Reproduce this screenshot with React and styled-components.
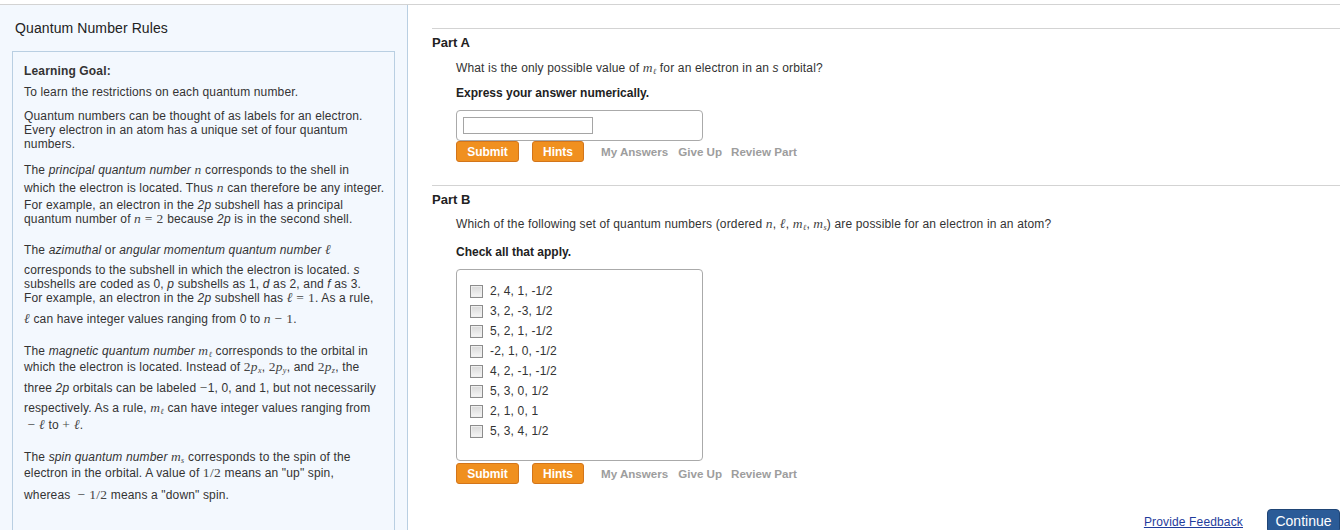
import React from "react";
import styled, { createGlobalStyle } from "styled-components";

const GlobalStyle = createGlobalStyle`
  html, body { margin: 0; padding: 0; background: #fff; }
  body { font-family: "Liberation Sans", Arial, sans-serif; color: #333; }
`;

const Page = styled.div`
  height: 530px;
  overflow: hidden;
  padding-top: 4px;
  box-sizing: border-box;
`;

const Frame = styled.div`
  border-top: 1px solid #d3d3d3;
  display: flex;
  height: 100%;
`;

const Sidebar = styled.aside`
  width: 408px;
  flex-shrink: 0;
  background: #f3f8fe;
  border-right: 1px solid #b9cfe2;
  box-sizing: border-box;
  padding: 14px 12px 0 12px;
`;

const SideTitle = styled.h2`
  margin: 0 0 14px 3px;
  font-size: 14px;
  line-height: 18px;
  font-weight: normal;
  color: #222;
  letter-spacing: 0.1px;
`;

const GoalBox = styled.div`
  border: 1px solid #b9cfe2;
  border-bottom: none;
  height: 600px;
  padding: 12px 11px 0 11px;
  font-size: 12px;
  color: #333;
  letter-spacing: 0.15px;
`;

const Line = styled.div`
  margin-top: ${(p) => p.$gap || 0}px;
  line-height: 14px;
  height: 14px;
  white-space: nowrap;
  font-weight: ${(p) => (p.$bold ? "bold" : "normal")};
`;

const Math = styled.span`
  font-family: "Liberation Serif", "Times New Roman", serif;
  font-style: ${(p) => (p.$upright ? "normal" : "italic")};
  font-size: 13.5px;
  line-height: 0;
  letter-spacing: 0.3px;
  color: #444;
`;

const Sub = styled.sub`
  font-size: 8px;
  line-height: 0;
  vertical-align: -2px;
`;

const Main = styled.main`
  flex: 1;
  padding-left: 24px;
  padding-top: 23px;
`;

const Section = styled.section`
  border-top: 1px solid #d3d3d3;
  padding-top: 6px;
  margin-top: ${(p) => p.$before || 0}px;
`;

const PartTitle = styled.h3`
  margin: 0;
  font-size: 13px;
  line-height: 16px;
  font-weight: bold;
  color: #222;
`;

const Body = styled.div`
  padding-left: 24px;
`;

const Prompt = styled.p`
  margin: ${(p) => p.$top}px 0 0 0;
  font-size: 12px;
  line-height: 14px;
  height: 14px;
  color: #333;
  letter-spacing: 0.15px;
  white-space: nowrap;
`;

const Instruction = styled.p`
  margin: ${(p) => p.$top}px 0 0 0;
  font-size: 12px;
  line-height: 14px;
  font-weight: bold;
  color: #222;
`;

const AnswerBox = styled.div`
  margin-top: 10px;
  width: 247px;
  height: ${(p) => p.$h}px;
  border: 1px solid #aaa;
  border-radius: 4px;
  box-sizing: border-box;
  padding: ${(p) => p.$pad};
`;

const TextInput = styled.div`
  width: 130px;
  height: 17px;
  border: 1px solid #a5a5a5;
  box-sizing: border-box;
  background: #fff;
`;

const Actions = styled.div`
  display: flex;
  align-items: center;
  margin-top: ${(p) => p.$top}px;
  height: 21px;
`;

const OrangeButton = styled.button`
  width: ${(p) => p.$w}px;
  height: 21px;
  margin-right: 13px;
  padding: 0;
  background: #f0901f;
  border: 1px solid #d3751a;
  border-radius: 3px;
  color: #fff;
  font-family: "Liberation Sans", Arial, sans-serif;
  font-size: 12px;
  font-weight: bold;
`;

const GrayLink = styled.span`
  margin-left: ${(p) => p.$left}px;
  font-size: 11.6px;
  font-weight: bold;
  color: #9d9d9d;
`;

const OptionRow = styled.label`
  display: flex;
  align-items: center;
  height: 20px;
  font-size: 12px;
  color: #333;
  letter-spacing: 0.15px;
`;

const Check = styled.span`
  width: 11px;
  height: 11px;
  border: 1px solid #8c8c8c;
  background: linear-gradient(#d8d8d8, #f5f5f5);
  margin-right: 7px;
  box-shadow: inset 0 0 0 1px #eee;
`;

const Footer = styled.div`
  display: flex;
  justify-content: flex-end;
  align-items: center;
  margin-top: 25px;
  gap: 24px;
`;

const FeedbackLink = styled.a`
  font-size: 12px;
  color: #1f3c9c;
  text-decoration: underline;
  margin-top: 2px;
  letter-spacing: 0.15px;
`;

const ContinueButton = styled.button`
  width: 73px;
  height: 24px;
  padding: 0;
  background: #2b5b97;
  border: 1px solid #1f4576;
  border-radius: 4px;
  color: #fff;
  font-family: "Liberation Sans", Arial, sans-serif;
  font-size: 14px;
`;

const ml = (
  <Math>
    m<Sub>ℓ</Sub>
  </Math>
);
const ms = (
  <Math>
    m<Sub>s</Sub>
  </Math>
);
const n = <Math>n</Math>;
const ell = <Math>ℓ</Math>;

const options = [
  "2, 4, 1, -1/2",
  "3, 2, -3, 1/2",
  "5, 2, 1, -1/2",
  "-2, 1, 0, -1/2",
  "4, 2, -1, -1/2",
  "5, 3, 0, 1/2",
  "2, 1, 0, 1",
  "5, 3, 4, 1/2",
];

const Buttons = ({ top }) => (
  <Actions $top={top}>
    <OrangeButton $w={63}>Submit</OrangeButton>
    <OrangeButton $w={52}>Hints</OrangeButton>
    <GrayLink $left={4}>My Answers</GrayLink>
    <GrayLink $left={10}>Give Up</GrayLink>
    <GrayLink $left={9}>Review Part</GrayLink>
  </Actions>
);

export default function App() {
  return (
    <>
      <GlobalStyle />
      <Page>
        <Frame>
          <Sidebar>
            <SideTitle>Quantum Number Rules</SideTitle>
            <GoalBox>
              <Line $bold>Learning Goal:</Line>
              <Line $gap={7}>To learn the restrictions on each quantum number.</Line>
              <Line $gap={10}>Quantum numbers can be thought of as labels for an electron.</Line>
              <Line>Every electron in an atom has a unique set of four quantum</Line>
              <Line>numbers.</Line>

              <Line $gap={12}>
                The <i>principal quantum number</i> {n} corresponds to the shell in
              </Line>
              <Line $gap={4}>
                which the electron is located. Thus {n} can therefore be any integer.
              </Line>
              <Line $gap={3}>
                For example, an electron in the <i>2p</i> subshell has a principal
              </Line>
              <Line>
                quantum number of {n}
                <Math $upright> = 2 </Math> because <i>2p</i> is in the second shell.
              </Line>

              <Line $gap={17}>
                The <i>azimuthal</i> or <i>angular momentum quantum number</i> {ell}
              </Line>
              <Line $gap={6}>
                corresponds to the subshell in which the electron is located. <i>s</i>
              </Line>
              <Line>
                subshells are coded as 0, <i>p</i> subshells as 1, <i>d</i> as 2, and <i>f</i> as 3.
              </Line>
              <Line>
                For example, an electron in the <i>2p</i> subshell has {ell}
                <Math $upright> = 1</Math>. As a rule,
              </Line>
              <Line $gap={7}>
                {ell} can have integer values ranging from 0 to {n}
                <Math $upright> − 1</Math>.
              </Line>

              <Line $gap={18}>
                The <i>magnetic quantum number</i> {ml} corresponds to the orbital in
              </Line>
              <Line $gap={2}>
                which the electron is located. Instead of{" "}
                <Math>
                  <Math $upright>2</Math>p<Sub>x</Sub>
                </Math>
                ,{" "}
                <Math>
                  <Math $upright>2</Math>p<Sub>y</Sub>
                </Math>
                , and{" "}
                <Math>
                  <Math $upright>2</Math>p<Sub>z</Sub>
                </Math>
                , the
              </Line>
              <Line $gap={7}>
                three <i>2p</i> orbitals can be labeled <Math $upright>−</Math>1, 0, and 1, but not
                necessarily
              </Line>
              <Line $gap={6}>
                respectively. As a rule, {ml} can have integer values ranging from
              </Line>
              <Line $gap={3}>
                &nbsp;<Math $upright>− </Math>
                {ell} to <Math $upright> + </Math>
                {ell}.
              </Line>

              <Line $gap={18}>
                The <i>spin quantum number</i> {ms} corresponds to the spin of the
              </Line>
              <Line $gap={2}>
                electron in the orbital. A value of <Math $upright>1/2</Math> means an "up" spin,
              </Line>
              <Line $gap={8}>
                whereas <Math $upright>&nbsp;− 1/2</Math> means a "down" spin.
              </Line>
            </GoalBox>
          </Sidebar>

          <Main>
            <Section>
              <PartTitle>Part A</PartTitle>
              <Body>
                <Prompt $top={10}>
                  What is the only possible value of {ml} for an electron in an <i>s</i> orbital?
                </Prompt>
                <Instruction $top={11}>Express your answer numerically.</Instruction>
                <AnswerBox $h={31} $pad="6px 0 0 6px">
                  <TextInput />
                </AnswerBox>
                <Buttons top={0} />
              </Body>
            </Section>

            <Section $before={23}>
              <PartTitle>Part B</PartTitle>
              <Body>
                <Prompt $top={9}>
                  Which of the following set of quantum numbers (ordered {n}, {ell}, {ml}, {ms}) are
                  possible for an electron in an atom?
                </Prompt>
                <Instruction $top={14}>Check all that apply.</Instruction>
                <AnswerBox $h={192} $pad="11px 0 0 13px">
                  {options.map((o) => (
                    <OptionRow key={o}>
                      <Check />
                      {o}
                    </OptionRow>
                  ))}
                </AnswerBox>
                <Buttons top={2} />
              </Body>
            </Section>

            <Footer>
              <FeedbackLink href="#">Provide Feedback</FeedbackLink>
              <ContinueButton>Continue</ContinueButton>
            </Footer>
          </Main>
        </Frame>
      </Page>
    </>
  );
}
